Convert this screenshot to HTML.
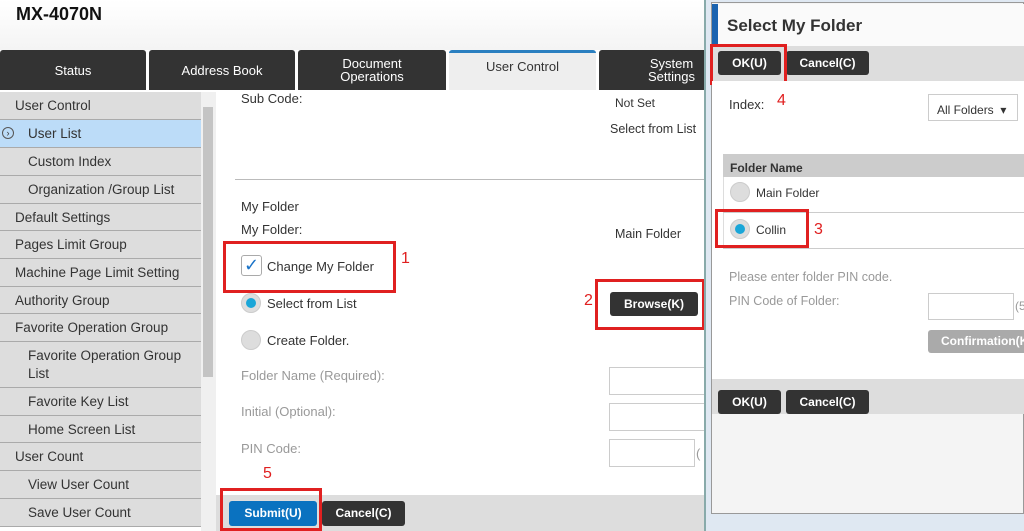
<!DOCTYPE html>
<html><head><meta charset="utf-8"><style>
*{margin:0;padding:0;box-sizing:border-box}
body{width:1024px;height:531px;overflow:hidden;position:relative;background:#fff;font-family:"Liberation Sans","DejaVu Sans",sans-serif;color:#333;font-size:13px}
.a{position:absolute}
.tab{position:absolute;top:50px;height:40px;background:#333;color:#fff;text-align:center;font-size:13px;line-height:13px;display:flex;align-items:center;justify-content:center;border-top-left-radius:3px;border-top-right-radius:3px}
.side{position:absolute;left:0;width:201px;background:#ddd;border-bottom:1px solid #aaa;font-size:13.5px;padding-left:15px;display:flex;align-items:center}
.sub{padding-left:28px}
.btn{position:absolute;background:#333;color:#fff;font-weight:bold;font-size:12px;border-radius:3px;text-align:center}
.red{position:absolute;border:3px solid #e02020}
.num{position:absolute;color:#e02020;font-size:16px}
.radio{position:absolute;width:20px;height:20px;border-radius:50%;background:#ddd;border:1px solid #ccc}
.radio.on::after{content:"";position:absolute;left:4px;top:4px;width:10px;height:10px;border-radius:50%;background:#1aa6d8}
.g{color:#999}
.inp{position:absolute;border:1px solid #ccc;background:#fff}
</style></head><body>
<div class="a" style="left:0;top:0;width:706px;height:50px;background:linear-gradient(#fff,#f4f4f4)"></div>
<div class="a" style="left:16px;top:4px;font-weight:bold;font-size:18px;color:#111">MX-4070N</div>
<div class="tab" style="left:0;width:146px">Status</div>
<div class="tab" style="left:149px;width:146px">Address Book</div>
<div class="tab" style="left:298px;width:148px">Document<br>Operations</div>
<div class="tab" style="left:449px;width:147px;background:#eee;color:#333;border-top:3px solid #2a7fc0;align-items:flex-start;padding-top:7px">User Control</div>
<div class="tab" style="left:599px;width:150px;padding-left:0;justify-content:flex-start;padding-left:49px">System<br>Settings</div>

<div class="side" style="top:92px;height:28px">User Control</div>
<div class="side sub" style="top:120px;height:28px;background:#bcdcf8">User List</div>
<div class="a" style="left:2px;top:127px;width:12px;height:12px;border:1px solid #555;border-radius:50%;font-size:9px;line-height:10px;text-align:center">›</div>
<div class="side sub" style="top:148px;height:28px">Custom Index</div>
<div class="side sub" style="top:176px;height:28px">Organization /Group List</div>
<div class="side" style="top:204px;height:27px">Default Settings</div>
<div class="side" style="top:231px;height:28px">Pages Limit Group</div>
<div class="side" style="top:259px;height:28px">Machine Page Limit Setting</div>
<div class="side" style="top:287px;height:27px">Authority Group</div>
<div class="side" style="top:314px;height:28px">Favorite Operation Group</div>
<div class="side sub" style="top:342px;height:46px;line-height:18px">Favorite Operation Group<br>List</div>
<div class="side sub" style="top:388px;height:28px">Favorite Key List</div>
<div class="side sub" style="top:416px;height:27px">Home Screen List</div>
<div class="side" style="top:443px;height:28px">User Count</div>
<div class="side sub" style="top:471px;height:28px">View User Count</div>
<div class="side sub" style="top:499px;height:28px">Save User Count</div>
<div class="a" style="left:201px;top:92px;width:15px;height:439px;background:#f0f0f0"></div>
<div class="a" style="left:203px;top:107px;width:10px;height:270px;background:#c4c4c4"></div>

<div class="a" style="left:241px;top:91px">Sub Code:</div>
<div class="a" style="left:615px;top:96px;font-size:12px">Not Set</div>
<div class="a" style="left:610px;top:122px;font-size:12.5px">Select from List</div>
<div class="a" style="left:235px;top:179px;width:471px;height:1px;background:#bbb"></div>
<div class="a" style="left:241px;top:199px">My Folder</div>
<div class="a" style="left:241px;top:222px">My Folder:</div>
<div class="a" style="left:615px;top:227px;font-size:12.5px">Main Folder</div>
<div class="a" style="left:241px;top:255px;width:21px;height:21px;border:1px solid #aaa;border-radius:3px;background:#fff;color:#1a73c8;font-size:18px;line-height:19px;text-align:center;font-weight:bold">✓</div>
<div class="a" style="left:267px;top:259px">Change My Folder</div>
<div class="red" style="left:223px;top:241px;width:173px;height:52px"></div>
<div class="num" style="left:401px;top:250px">1</div>
<div class="radio on" style="left:241px;top:293px"></div>
<div class="a" style="left:267px;top:296px">Select from List</div>
<div class="radio" style="left:241px;top:330px"></div>
<div class="a" style="left:267px;top:333px">Create Folder.</div>
<div class="num" style="left:584px;top:292px">2</div>
<div class="red" style="left:595px;top:279px;width:110px;height:51px"></div>
<div class="btn" style="left:610px;top:292px;width:88px;height:24px;line-height:24px">Browse(K)</div>
<div class="a g" style="left:241px;top:368px">Folder Name (Required):</div>
<div class="a g" style="left:241px;top:404px">Initial (Optional):</div>
<div class="a g" style="left:241px;top:441px">PIN Code:</div>
<div class="inp" style="left:609px;top:367px;width:100px;height:28px"></div>
<div class="inp" style="left:609px;top:403px;width:100px;height:28px"></div>
<div class="inp" style="left:609px;top:439px;width:86px;height:28px"></div>
<div class="a g" style="left:696px;top:446px">(</div>
<div class="num" style="left:263px;top:465px">5</div>
<div class="a" style="left:216px;top:495px;width:490px;height:36px;background:#ddd"></div>
<div class="btn" style="left:229px;top:501px;width:88px;height:25px;line-height:25px;background:#0a72c0">Submit(U)</div>
<div class="btn" style="left:322px;top:501px;width:83px;height:25px;line-height:25px">Cancel(C)</div>
<div class="red" style="left:220px;top:488px;width:102px;height:43px"></div>

<div class="a" style="left:704px;top:0;width:320px;height:531px;background:#dfe8f2;border-left:2px solid #8aa"></div>
<div class="a" style="left:711px;top:2px;width:313px;height:512px;background:#f4f4f4;border:1px solid #999"></div>
<div class="a" style="left:712px;top:4px;width:312px;height:42px;background:#fafafa"></div>
<div class="a" style="left:712px;top:4px;width:6px;height:42px;background:#1a63b0"></div>
<div class="a" style="left:727px;top:16px;font-size:17px;font-weight:bold">Select My Folder</div>
<div class="a" style="left:712px;top:46px;width:312px;height:35px;background:#ddd"></div>
<div class="btn" style="left:718px;top:51px;width:63px;height:24px;line-height:24px">OK(U)</div>
<div class="btn" style="left:786px;top:51px;width:83px;height:24px;line-height:24px">Cancel(C)</div>
<div class="red" style="left:710px;top:44px;width:77px;height:41px"></div>
<div class="a" style="left:712px;top:81px;width:312px;height:299px;background:#fff"></div>
<div class="a" style="left:729px;top:97px">Index:</div>
<div class="num" style="left:777px;top:92px">4</div>
<div class="a" style="left:928px;top:94px;width:90px;height:27px;border:1px solid #ccc;font-size:12px;padding:8px 0 0 8px">All Folders &nbsp;▾</div>
<div class="a" style="left:723px;top:154px;width:301px;height:23px;background:#ccc;font-weight:bold;font-size:12px;padding:7px 0 0 7px">Folder Name</div>
<div class="a" style="left:723px;top:177px;width:301px;height:72px;border-left:1px solid #ddd"></div>
<div class="a" style="left:723px;top:212px;width:301px;height:1px;background:#ccc"></div>
<div class="a" style="left:723px;top:248px;width:301px;height:1px;background:#ccc"></div>
<div class="radio" style="left:730px;top:182px"></div>
<div class="a" style="left:756px;top:186px;font-size:12px">Main Folder</div>
<div class="radio on" style="left:730px;top:219px"></div>
<div class="a" style="left:756px;top:223px;font-size:12px">Collin</div>
<div class="red" style="left:715px;top:209px;width:94px;height:39px"></div>
<div class="num" style="left:814px;top:221px">3</div>
<div class="a g" style="left:729px;top:270px;font-size:12.5px">Please enter folder PIN code.</div>
<div class="a g" style="left:729px;top:294px;font-size:12.5px">PIN Code of Folder:</div>
<div class="inp" style="left:928px;top:293px;width:86px;height:27px"></div>
<div class="a g" style="left:1015px;top:299px;font-size:12px">(5</div>
<div class="btn" style="left:928px;top:330px;width:100px;height:23px;line-height:23px;background:#aaa;text-align:left;padding-left:13px">Confirmation(K)</div>
<div class="a" style="left:712px;top:379px;width:312px;height:35px;background:#ddd"></div>
<div class="btn" style="left:718px;top:390px;width:63px;height:24px;line-height:24px">OK(U)</div>
<div class="btn" style="left:786px;top:390px;width:83px;height:24px;line-height:24px">Cancel(C)</div>
</body></html>
